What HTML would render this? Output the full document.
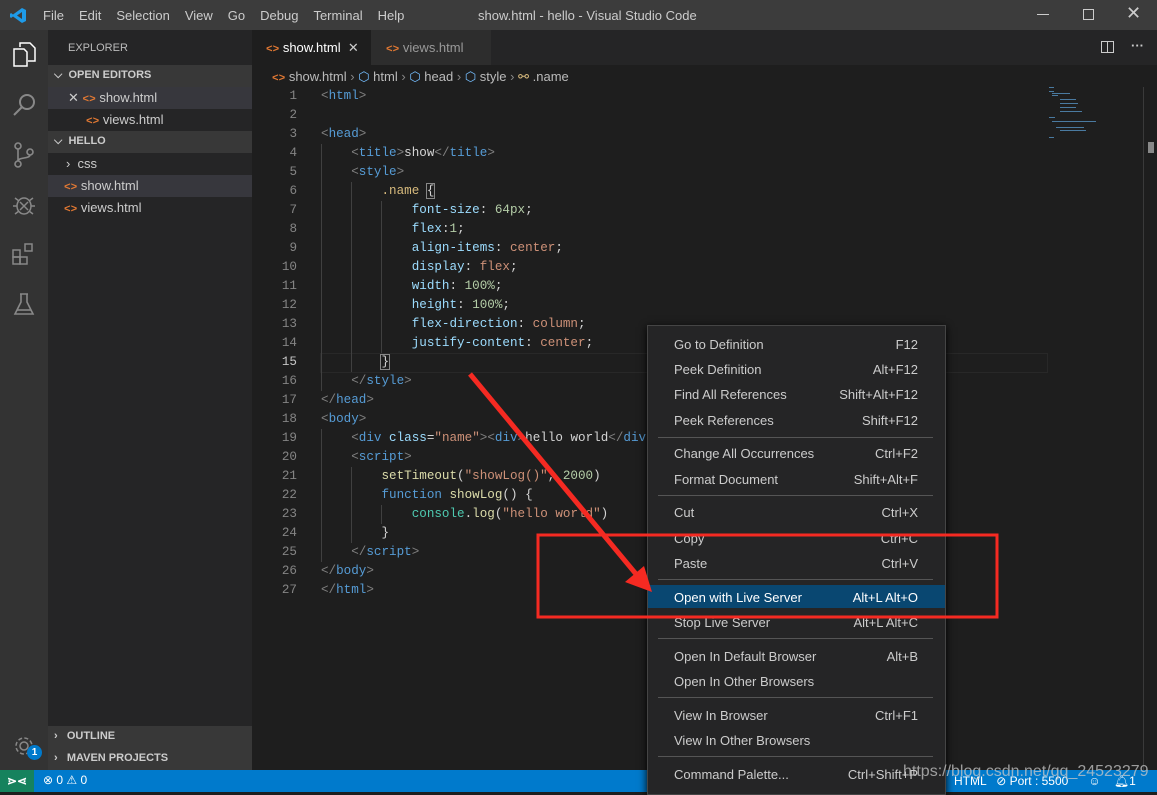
<!DOCTYPE html>
<html><head><meta charset="utf-8"><style>
*{margin:0;padding:0;box-sizing:border-box}
body{width:1157px;height:792px;overflow:hidden;background:#1e1e1e;font-family:"Liberation Sans",sans-serif;font-size:13px;color:#ccc;position:relative}
.a{position:absolute}
.menu span{margin-right:15px}
.code{font-family:"Liberation Mono",monospace;font-size:12.6px;white-space:pre;line-height:19px}
.t{color:#808080}.tn{color:#569cd6}.at{color:#9cdcfe}.s{color:#ce9178}.w{color:#d4d4d4}.cl{color:#d7ba7d}.y{color:#dcdcaa}.n{color:#b5cea8}.g{color:#4ec9b0}
.cm div.i{position:absolute;left:26px;right:27px;height:24px;line-height:24px;color:#ccc;font-size:13px}
.cm .i b{position:absolute;right:0;font-weight:normal}
.sep{position:absolute;left:10px;right:12px;height:1px;background:#555}
.ic{color:#e37933;font-family:"Liberation Mono",monospace;font-size:11px;font-weight:bold}
</style></head><body>
<div class="a" style="left:0;top:0;width:1157px;height:30px;background:#3c3c3c"></div>
<svg class="a" style="left:10px;top:7px" width="17" height="17" viewBox="0 0 17 17"><path d="M12 1L16 3V14L12 16L3 9.5L1 11L0 10V7L1 6L3 7.5ZM12 5L7 8.5L12 12Z" fill="#1e9be9"/></svg>
<div class="a menu" style="left:43px;top:8px;color:#ccc;font-size:13px"><span>File</span><span>Edit</span><span>Selection</span><span>View</span><span>Go</span><span>Debug</span><span>Terminal</span><span>Help</span></div>
<div class="a" style="left:478px;top:8px;color:#ccc">show.html - hello - Visual Studio Code</div>
<div class="a" style="left:1037px;top:14px;width:12px;height:1px;background:#ccc"></div>
<div class="a" style="left:1083px;top:9px;width:11px;height:11px;border:1px solid #ccc"></div>
<div class="a" style="left:1126px;top:3px;color:#ccc;font-size:18px">✕</div>
<div class="a" style="left:0;top:30px;width:48px;height:740px;background:#333"></div>
<svg class="a" style="left:12px;top:42px" width="24" height="26" fill="none" stroke="#fff" stroke-width="1.5"><path d="M8 5V1H18L23 6V19H16M2 7H12L15 10V24H2Z"/></svg>
<svg class="a" style="left:12px;top:92px" width="26" height="26" fill="none" stroke="#888" stroke-width="2"><circle cx="15" cy="10" r="7"/><path d="M10 15L2 23"/></svg>
<svg class="a" style="left:12px;top:142px" width="24" height="26" fill="none" stroke="#888" stroke-width="1.6"><circle cx="6" cy="4" r="3"/><circle cx="6" cy="22" r="3"/><circle cx="18" cy="10" r="3"/><path d="M6 7V19M18 13C18 17 6 15 6 19"/></svg>
<svg class="a" style="left:11px;top:192px" width="26" height="26" fill="none" stroke="#888" stroke-width="1.5"><ellipse cx="13" cy="14" rx="7" ry="8"/><path d="M9 10L17 18M17 10L9 18M2 14H6M20 14H24M4 6L8 9M22 6L18 9M4 22L8 19M22 22L18 19"/></svg>
<svg class="a" style="left:11px;top:242px" width="26" height="26" fill="none" stroke="#888" stroke-width="1.5"><rect x="2" y="8" width="7" height="7"/><rect x="2" y="15" width="7" height="7"/><rect x="9" y="15" width="7" height="7"/><rect x="14" y="2" width="7" height="7"/></svg>
<svg class="a" style="left:12px;top:292px" width="24" height="26" fill="none" stroke="#888" stroke-width="1.6"><path d="M8 2H16M9 2V10L3 22H21L15 10V2"/><path d="M5 18H19" /></svg>
<svg class="a" style="left:11px;top:733px" width="26" height="26" fill="none" stroke="#888" stroke-width="1.5"><circle cx="13" cy="13" r="4"/><circle cx="13" cy="13" r="8" stroke-dasharray="4 2.3"/></svg>
<div class="a" style="left:27px;top:745px;width:15px;height:15px;border-radius:50%;background:#007acc;color:#fff;font-size:10px;font-weight:bold;text-align:center;line-height:15px">1</div>
<div class="a" style="left:48px;top:30px;width:204px;height:740px;background:#252526"></div>
<div class="a" style="left:68px;top:42px;font-size:11px;color:#bbb">EXPLORER</div>
<div class="a" style="left:48px;top:65px;width:204px;height:22px;background:#383838"></div>
<div class="a" style="left:54px;top:69px;font-size:11px;font-weight:bold;color:#ccc">⌵&nbsp; OPEN EDITORS</div>
<div class="a" style="left:48px;top:87px;width:204px;height:22px;background:#37373d"></div>
<div class="a" style="left:68px;top:90px;color:#ccc">✕ <span class="ic">&lt;&gt;</span> show.html</div>
<div class="a" style="left:86px;top:112px;color:#ccc"><span class="ic">&lt;&gt;</span> views.html</div>
<div class="a" style="left:48px;top:131px;width:204px;height:22px;background:#383838"></div>
<div class="a" style="left:54px;top:135px;font-size:11px;font-weight:bold;color:#ccc">⌵&nbsp; HELLO</div>
<div class="a" style="left:66px;top:156px;color:#ccc">›&nbsp;&nbsp;css</div>
<div class="a" style="left:48px;top:175px;width:204px;height:22px;background:#37373d"></div>
<div class="a" style="left:64px;top:178px;color:#ccc"><span class="ic">&lt;&gt;</span> show.html</div>
<div class="a" style="left:64px;top:200px;color:#ccc"><span class="ic">&lt;&gt;</span> views.html</div>
<div class="a" style="left:48px;top:726px;width:204px;height:44px;background:#383838"></div>
<div class="a" style="left:54px;top:730px;font-size:11px;font-weight:bold;color:#ccc">›&nbsp;&nbsp; OUTLINE</div>
<div class="a" style="left:54px;top:752px;font-size:11px;font-weight:bold;color:#ccc">›&nbsp;&nbsp; MAVEN PROJECTS</div>
<div class="a" style="left:252px;top:30px;width:905px;height:35px;background:#252526"></div>
<div class="a" style="left:252px;top:30px;width:119px;height:35px;background:#1e1e1e"></div>
<div class="a" style="left:266px;top:40px;color:#fff"><span class="ic">&lt;&gt;</span> show.html &nbsp;<span style="color:#ccc">✕</span></div>
<div class="a" style="left:371px;top:30px;width:120px;height:35px;background:#2d2d2d"></div>
<div class="a" style="left:386px;top:40px;color:#999"><span class="ic">&lt;&gt;</span> views.html</div>
<div class="a" style="left:1101px;top:41px;width:13px;height:12px;border:1px solid #ccc"></div>
<div class="a" style="left:1107px;top:41px;width:1px;height:12px;background:#ccc"></div>
<div class="a" style="left:1131px;top:38px;color:#ccc;font-weight:bold">···</div>
<div class="a" style="left:272px;top:69px;color:#bbb"><span class="ic">&lt;&gt;</span> show.html <span style="color:#888">›</span> <span style="color:#75beff">⬡</span> html <span style="color:#888">›</span> <span style="color:#75beff">⬡</span> head <span style="color:#888">›</span> <span style="color:#75beff">⬡</span> style <span style="color:#888">›</span> <span style="color:#d7ba7d">⚯</span> .name</div>
<div class="a" style="left:320px;top:353px;width:728px;height:20px;border:1px solid #282828"></div>
<div class="a" style="left:321px;top:144px;width:1px;height:247px;background:#404040"></div>
<div class="a" style="left:351px;top:182px;width:1px;height:190px;background:#404040"></div>
<div class="a" style="left:381px;top:201px;width:1px;height:152px;background:#404040"></div>
<div class="a" style="left:321px;top:429px;width:1px;height:133px;background:#404040"></div>
<div class="a" style="left:351px;top:467px;width:1px;height:76px;background:#404040"></div>
<div class="a" style="left:381px;top:505px;width:1px;height:19px;background:#404040"></div>
<div class="a code" style="left:262px;top:87px;width:35px;text-align:right;color:#858585">1
2
3
4
5
6
7
8
9
10
11
12
13
14
<span style="color:#c6c6c6">15</span>
16
17
18
19
20
21
22
23
24
25
26
27</div>
<div class="a code w" style="left:321px;top:87px"><span class="t">&lt;</span><span class="tn">html</span><span class="t">&gt;</span>

<span class="t">&lt;</span><span class="tn">head</span><span class="t">&gt;</span>
    <span class="t">&lt;</span><span class="tn">title</span><span class="t">&gt;</span>show<span class="t">&lt;/</span><span class="tn">title</span><span class="t">&gt;</span>
    <span class="t">&lt;</span><span class="tn">style</span><span class="t">&gt;</span>
        <span class="cl">.name</span> <span style="outline:1px solid #888">{</span>
            <span class="at">font-size</span>: <span class="n">64px</span>;
            <span class="at">flex</span>:<span class="n">1</span>;
            <span class="at">align-items</span>: <span class="s">center</span>;
            <span class="at">display</span>: <span class="s">flex</span>;
            <span class="at">width</span>: <span class="n">100%</span>;
            <span class="at">height</span>: <span class="n">100%</span>;
            <span class="at">flex-direction</span>: <span class="s">column</span>;
            <span class="at">justify-content</span>: <span class="s">center</span>;
        <span style="outline:1px solid #888">}</span>
    <span class="t">&lt;/</span><span class="tn">style</span><span class="t">&gt;</span>
<span class="t">&lt;/</span><span class="tn">head</span><span class="t">&gt;</span>
<span class="t">&lt;</span><span class="tn">body</span><span class="t">&gt;</span>
    <span class="t">&lt;</span><span class="tn">div</span> <span class="at">class</span>=<span class="s">"name"</span><span class="t">&gt;&lt;</span><span class="tn">div</span><span class="t">&gt;</span>hello world<span class="t">&lt;/</span><span class="tn">div</span>
    <span class="t">&lt;</span><span class="tn">script</span><span class="t">&gt;</span>
        <span class="y">setTimeout</span>(<span class="s">"showLog()"</span>, <span class="n">2000</span>)
        <span class="tn">function</span> <span class="y">showLog</span>() {
            <span class="g">console</span>.<span class="y">log</span>(<span class="s">"hello world"</span>)
        }
    <span class="t">&lt;/</span><span class="tn">script</span><span class="t">&gt;</span>
<span class="t">&lt;/</span><span class="tn">body</span><span class="t">&gt;</span>
<span class="t">&lt;/</span><span class="tn">html</span><span class="t">&gt;</span></div>
<svg class="a" style="left:1048px;top:85px" width="60" height="60"><g fill="#4a7aa0"><rect x="1" y="2" width="5" height="1"/><rect x="1" y="6" width="5" height="1"/><rect x="4" y="8" width="18" height="1"/><rect x="4" y="10" width="6" height="1"/><rect x="12" y="14" width="16" height="1"/><rect x="12" y="18" width="18" height="1"/><rect x="12" y="22" width="16" height="1"/><rect x="12" y="26" width="22" height="1"/><rect x="1" y="32" width="6" height="1"/><rect x="4" y="36" width="44" height="1"/><rect x="8" y="42" width="28" height="1"/><rect x="12" y="45" width="26" height="1"/><rect x="1" y="52" width="5" height="1"/></g></svg>
<div class="a" style="left:1143px;top:87px;width:1px;height:683px;background:#3a3a3a"></div>
<div class="a" style="left:1148px;top:142px;width:6px;height:11px;background:#888"></div>
<div class="a" style="left:0;top:770px;width:1157px;height:22px;background:#007acc"></div>
<div class="a" style="left:0;top:770px;width:34px;height:22px;background:#16825d;color:#fff;text-align:center;font-size:12px;line-height:22px;font-weight:bold">⋗⋖</div>
<div class="a" style="left:43px;top:773px;color:#fff;font-size:12px">⊗ 0 ⚠ 0</div>
<div class="a" style="left:954px;top:774px;color:#fff;font-size:12px">HTML &nbsp; ⊘ Port : 5500 &nbsp;&nbsp;&nbsp;&nbsp; ☺ &nbsp;&nbsp; 🔔︎1</div>
<div class="a cm" style="left:647px;top:325px;width:299px;height:470px;background:#252526;border:1px solid #454545;box-shadow:0 2px 8px #000">
<div class="i" style="top:7px">Go to Definition<b>F12</b></div>
<div class="i" style="top:32px">Peek Definition<b>Alt+F12</b></div>
<div class="i" style="top:57px">Find All References<b>Shift+Alt+F12</b></div>
<div class="i" style="top:83px">Peek References<b>Shift+F12</b></div>
<div class="sep" style="top:111px"></div>
<div class="i" style="top:116px">Change All Occurrences<b>Ctrl+F2</b></div>
<div class="i" style="top:142px">Format Document<b>Shift+Alt+F</b></div>
<div class="sep" style="top:169px"></div>
<div class="i" style="top:175px">Cut<b>Ctrl+X</b></div>
<div class="i" style="top:201px">Copy<b>Ctrl+C</b></div>
<div class="i" style="top:226px">Paste<b>Ctrl+V</b></div>
<div class="sep" style="top:253px"></div>
<div class="a" style="left:0;top:259px;width:297px;height:23px;background:#094771"></div>
<div class="i" style="top:260px;color:#fff">Open with Live Server<b>Alt+L Alt+O</b></div>
<div class="i" style="top:285px">Stop Live Server<b>Alt+L Alt+C</b></div>
<div class="sep" style="top:312px"></div>
<div class="i" style="top:319px">Open In Default Browser<b>Alt+B</b></div>
<div class="i" style="top:344px">Open In Other Browsers</div>
<div class="sep" style="top:371px"></div>
<div class="i" style="top:378px">View In Browser<b>Ctrl+F1</b></div>
<div class="i" style="top:403px">View In Other Browsers</div>
<div class="sep" style="top:430px"></div>
<div class="i" style="top:437px">Command Palette...<b>Ctrl+Shift+P</b></div>
</div>
<svg class="a" style="left:0;top:0" width="1157" height="792"><rect x="538" y="535" width="459" height="82" fill="none" stroke="#f52a22" stroke-width="3"/><path d="M470 374L636 574" stroke="#f52a22" stroke-width="5"/><path d="M652 592L625 582L644 566Z" fill="#f52a22"/></svg>
<div class="a" style="left:903px;top:763px;color:rgba(200,200,200,0.75);font-size:16px">https://blog.csdn.net/qq_24523279</div>
</body></html>
